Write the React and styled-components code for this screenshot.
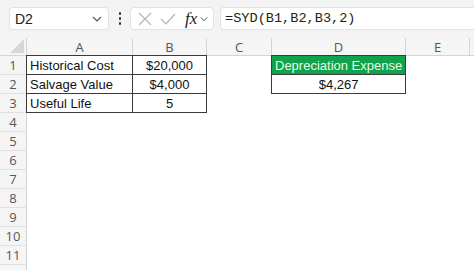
import styled, { createGlobalStyle } from 'styled-components'

const Global = createGlobalStyle`
    body {
        margin: 0;
        background: #ffffff;
        font-family: "Liberation Sans", Arial, sans-serif;
        overflow: hidden;
    }
`;

const COLS = [
    { key: 'A', width: 106 },
    { key: 'B', width: 74 },
    { key: 'C', width: 65 },
    { key: 'D', width: 134 },
    { key: 'E', width: 64 },
];

const ROWS = 12;
// the last row is only partly in view, so its number is not shown
const LABELLED = 11;

const App = () => {
    return (
        <Page>
            <Global />
            <Toolbar>
                <NameBox>
                    <span>D2</span>
                    <Chevron size={12} />
                </NameBox>
                <Dots>
                    <i /><i /><i />
                </Dots>
                <FxBox>
                    <svg width="16" height="16" viewBox="0 0 16 16">
                        <path d="M2 2 L14 14 M14 2 L2 14" stroke="#b3b3b3" strokeWidth="1.2" fill="none" />
                    </svg>
                    <svg width="18" height="16" viewBox="0 0 18 16">
                        <path d="M2 8 L7 13 L16 3" stroke="#b3b3b3" strokeWidth="1.2" fill="none" />
                    </svg>
                    <Fx>fx</Fx>
                    <Chevron size={10} />
                </FxBox>
                <FormulaBar>=SYD(B1,B2,B3,2)</FormulaBar>
            </Toolbar>

            <Sheet>
                <Corner>
                    <svg width="14" height="14" viewBox="0 0 14 14">
                        <path d="M14 0 L14 14 L0 14 Z" fill="#d6d6d6" />
                    </svg>
                </Corner>
                {COLS.map((c) => (
                    <ColHead key={c.key}>{c.key}</ColHead>
                ))}
                <ColHead $last />

                {Array.from({ length: ROWS }, (_, i) => (
                    <RowHead key={i} style={{ gridRow: i + 2 }}>
                        {i < LABELLED ? i + 1 : ''}
                    </RowHead>
                ))}

                <InputTable>
                    <Cell>Historical Cost</Cell>
                    <Cell $center>$20,000</Cell>
                    <Cell>Salvage Value</Cell>
                    <Cell $center>$4,000</Cell>
                    <Cell>Useful Life</Cell>
                    <Cell $center>5</Cell>
                </InputTable>

                <ResultTable>
                    <HeadCell>Depreciation Expense</HeadCell>
                    <Cell $center>$4,267</Cell>
                </ResultTable>
            </Sheet>
        </Page>
    )
}

const Chevron = ({ size }) => (
    <svg width={size} height={size} viewBox="0 0 12 12">
        <path d="M2 4 L6 8 L10 4" stroke="#555" strokeWidth="1.2" fill="none" />
    </svg>
);

const Page = styled.div`
    width: 474px;
    height: 270px;
    overflow: hidden;
`;

const Toolbar = styled.div`
    height: 38px;
    box-sizing: border-box;
    background: #f3f3f3;
    display: flex;
    align-items: flex-start;
    padding: 7px 0 0 9px;
`;

const NameBox = styled.div`
    width: 100px;
    height: 23px;
    box-sizing: border-box;
    background: #ffffff;
    border: 1px solid #e2e2e2;
    border-radius: 4px;
    display: flex;
    align-items: center;
    justify-content: space-between;
    padding: 0 5px 0 5px;
    font-size: 14px;
    color: #222;
`;

const Dots = styled.div`
    width: 21px;
    height: 23px;
    display: flex;
    flex-direction: column;
    align-items: center;
    justify-content: center;
    gap: 2px;

    i {
        width: 2px;
        height: 3px;
        background: #333;
        border-radius: 1px;
    }
`;

const FxBox = styled.div`
    width: 84px;
    height: 23px;
    box-sizing: border-box;
    background: #ffffff;
    border: 1px solid #e2e2e2;
    border-radius: 4px;
    display: flex;
    align-items: center;
    gap: 6px;
    padding: 0 3px 0 6px;
`;

const Fx = styled.span`
    font-family: "Liberation Serif", "Times New Roman", serif;
    font-style: italic;
    font-size: 17px;
    color: #222;
    margin-left: 2px;
    margin-right: -4px;
`;

const FormulaBar = styled.div`
    flex: 1;
    height: 23px;
    margin-left: 6px;
    box-sizing: border-box;
    background: #ffffff;
    border: 1px solid #e2e2e2;
    border-right: none;
    border-radius: 4px 0 0 4px;
    display: flex;
    align-items: center;
    padding-left: 4px;
    font-family: "Liberation Mono", "Courier New", monospace;
    font-size: 13.6px;
    color: #222;
`;

const Sheet = styled.div`
    display: grid;
    grid-template-columns: 27px ${COLS.map((c) => `${c.width}px`).join(' ')} 1fr;
    grid-template-rows: 18px repeat(${ROWS}, 19px);
`;

const Corner = styled.div`
    background: #f5f5f5;
    border-bottom: 1px solid #d4d4d4;
    border-right: 1px solid #d4d4d4;
    box-sizing: border-box;
    display: flex;
    align-items: flex-end;
    justify-content: flex-end;
    padding: 0 2px 2px 0;
`;

const ColHead = styled.div`
    background: #f5f5f5;
    border-bottom: 1px solid #d4d4d4;
    border-right: ${(p) => (p.$last ? 'none' : '1px solid #d4d4d4')};
    box-sizing: border-box;
    display: flex;
    align-items: center;
    justify-content: center;
    font-family: "Open Sans", sans-serif;
    font-size: 13px;
    color: #555;
`;

const RowHead = styled.div`
    grid-column: 1;
    background: #f5f5f5;
    border-bottom: 1px solid #e0e0e0;
    border-right: 1px solid #d4d4d4;
    box-sizing: border-box;
    display: flex;
    align-items: center;
    justify-content: center;
    font-family: "Open Sans", sans-serif;
    font-size: 13px;
    color: #555;
`;

const InputTable = styled.div`
    grid-column: 2 / 4;
    grid-row: 2 / 5;
    display: grid;
    grid-template-columns: 106px 74px;
    grid-template-rows: repeat(3, 19px);
    margin: -1px 0 0 -1px;
    border-top: 1px solid #3a3a3a;
    border-left: 1px solid #3a3a3a;
`;

const ResultTable = styled.div`
    grid-column: 5;
    grid-row: 2 / 4;
    display: grid;
    grid-template-rows: repeat(2, 19px);
    margin: -1px 0 0 -1px;
    border-top: 1px solid #3a3a3a;
    border-left: 1px solid #3a3a3a;
`;

const Cell = styled.div`
    box-sizing: border-box;
    border-right: 1px solid #3a3a3a;
    border-bottom: 1px solid #3a3a3a;
    display: flex;
    align-items: center;
    justify-content: ${(p) => (p.$center ? 'center' : 'flex-start')};
    padding: 0 3px;
    font-size: 13px;
    color: #111;
    white-space: nowrap;
`;

const HeadCell = styled(Cell)`
    background: #12a14c;
    color: #e4fde4;
    justify-content: center;
`;

export default App;
